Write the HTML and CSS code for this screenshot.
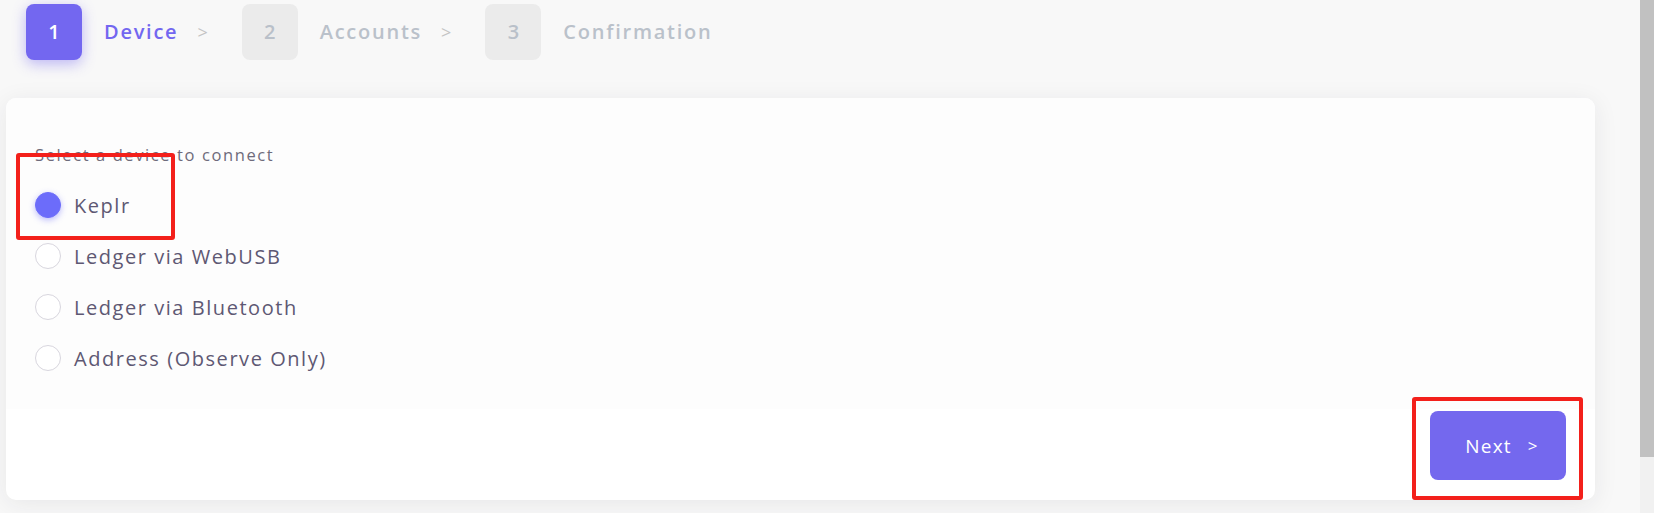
FILE: index.html
```html
<!DOCTYPE html>
<html lang="en">
<head>
<meta charset="utf-8">
<title>Connect device</title>
<link rel="stylesheet" href="styles.css">
</head>
<body>
<div class="page">
  <main class="main">
    <nav class="steps">
      <div class="step active">
        <span class="step-num">1</span>
        <span class="step-label">Device</span>
        <span class="step-sep">&gt;</span>
      </div>
      <div class="step">
        <span class="step-num">2</span>
        <span class="step-label">Accounts</span>
        <span class="step-sep">&gt;</span>
      </div>
      <div class="step">
        <span class="step-num">3</span>
        <span class="step-label">Confirmation</span>
      </div>
    </nav>

    <section class="card">
      <div class="card-body">
        <div class="field-label">Select a device to connect</div>
        <div class="options">
          <label class="option checked"><span class="radio"></span><span class="opt-text">Keplr</span></label>
          <label class="option"><span class="radio"></span><span class="opt-text">Ledger via WebUSB</span></label>
          <label class="option"><span class="radio"></span><span class="opt-text">Ledger via Bluetooth</span></label>
          <label class="option"><span class="radio"></span><span class="opt-text">Address (Observe Only)</span></label>
        </div>
      </div>
      <div class="card-footer">
        <button class="btn-next"><span>Next</span><span class="chev">&gt;</span></button>
      </div>
      <div class="mark mark-keplr"></div>
      <div class="mark mark-next"></div>
    </section>
  </main>
  <div class="scrollbar"><div class="thumb"></div></div>
</div>
</body>
</html>
```

FILE: styles.css
```css
* { box-sizing: border-box; }
html, body { margin: 0; padding: 0; }
body {
  background: #f8f8f8;
  font-family: "Open Sans", "Liberation Sans", sans-serif;
  color: #5e5873;
  height: 513px;
  overflow: hidden;
}
.page {
  display: flex;
  height: 513px;
}
.main {
  flex: 1;
  padding-left: 6px;
  padding-right: 45px;
  display: flex;
  flex-direction: column;
}
.steps {
  display: flex;
  align-items: center;
  padding-top: 4px;
  padding-left: 20px;
  height: 60px;
}
.step {
  display: flex;
  align-items: center;
}
.step-num {
  width: 56px;
  height: 56px;
  border-radius: 8px;
  background: #ebebeb;
  color: #b9c0c9;
  display: flex;
  align-items: center;
  justify-content: center;
  font-size: 20px;
  font-weight: 600;
  padding-bottom: 2px;
}
.step-label {
  margin-left: 22px;
  font-size: 20px;
  font-weight: 600;
  color: #bac1ca;
  letter-spacing: 1.75px;
  line-height: 1;
  margin-top: -1px;
}
.step-sep {
  margin-left: 19px;
  margin-right: 34px;
  color: #c4c4c4;
  font-size: 18px;
  margin-top: -1px;
}
.step.active .step-num {
  background: #7367f0;
  color: #fff;
  box-shadow: 0 4px 14px rgba(115,103,240,0.45);
}
.step.active .step-label { color: #7367f0; }

.card {
  position: relative;
  margin-top: 38px;
  height: 402px;
  background: #fff;
  border-radius: 10px;
  box-shadow: 0 4px 24px rgba(34,41,47,0.08);
  display: flex;
  flex-direction: column;
}
.card-body {
  height: 311px;
  padding: 47px 29px 0 29px;
  background: #fdfdfd;
  border-radius: 10px 10px 0 0;
}
.field-label {
  font-size: 16.5px;
  color: #6e6b7b;
  line-height: 20px;
  letter-spacing: 1.6px;
}
.options {
  margin-top: 27px;
  display: flex;
  flex-direction: column;
  gap: 25px;
}
.option {
  display: flex;
  align-items: center;
  height: 26px;
}
.radio {
  width: 26px;
  height: 26px;
  border-radius: 50%;
  border: 1px solid #d8d6de;
  background: #fff;
  flex-shrink: 0;
}
.option.checked .radio {
  background: #6c6cfa;
  border-color: #6c6cfa;
  box-shadow: 0 2px 6px rgba(108,108,250,0.45);
}
.opt-text {
  margin-left: 13px;
  font-size: 20px;
  color: #5e5873;
  letter-spacing: 1.55px;
}
.card-footer {
  flex: 1;
  display: flex;
  justify-content: flex-end;
  align-items: flex-start;
  padding: 2px 29px 0 0;
}
.btn-next {
  width: 136px;
  height: 69px;
  border: none;
  border-radius: 8px;
  background: #7468ee;
  color: #fff;
  font-family: inherit;
  font-size: 19px;
  display: flex;
  align-items: center;
  justify-content: center;
  gap: 16px;
  padding: 0 0 0 8px;
  letter-spacing: 1.2px;
}
.chev { font-size: 17px; }
.mark {
  position: absolute;
  border: 4px solid #f3201b;
  border-radius: 3px;
  pointer-events: none;
}
.mark-keplr {
  left: 10px;
  top: 55px;
  width: 159px;
  height: 87px;
}
.mark-next {
  right: 12px;
  bottom: 0;
  width: 171px;
  height: 103px;
}
.scrollbar {
  width: 14px;
  background: #f1f1f1;
  flex-shrink: 0;
}
.thumb {
  height: 457px;
  background: #c1c1c1;
}
```
